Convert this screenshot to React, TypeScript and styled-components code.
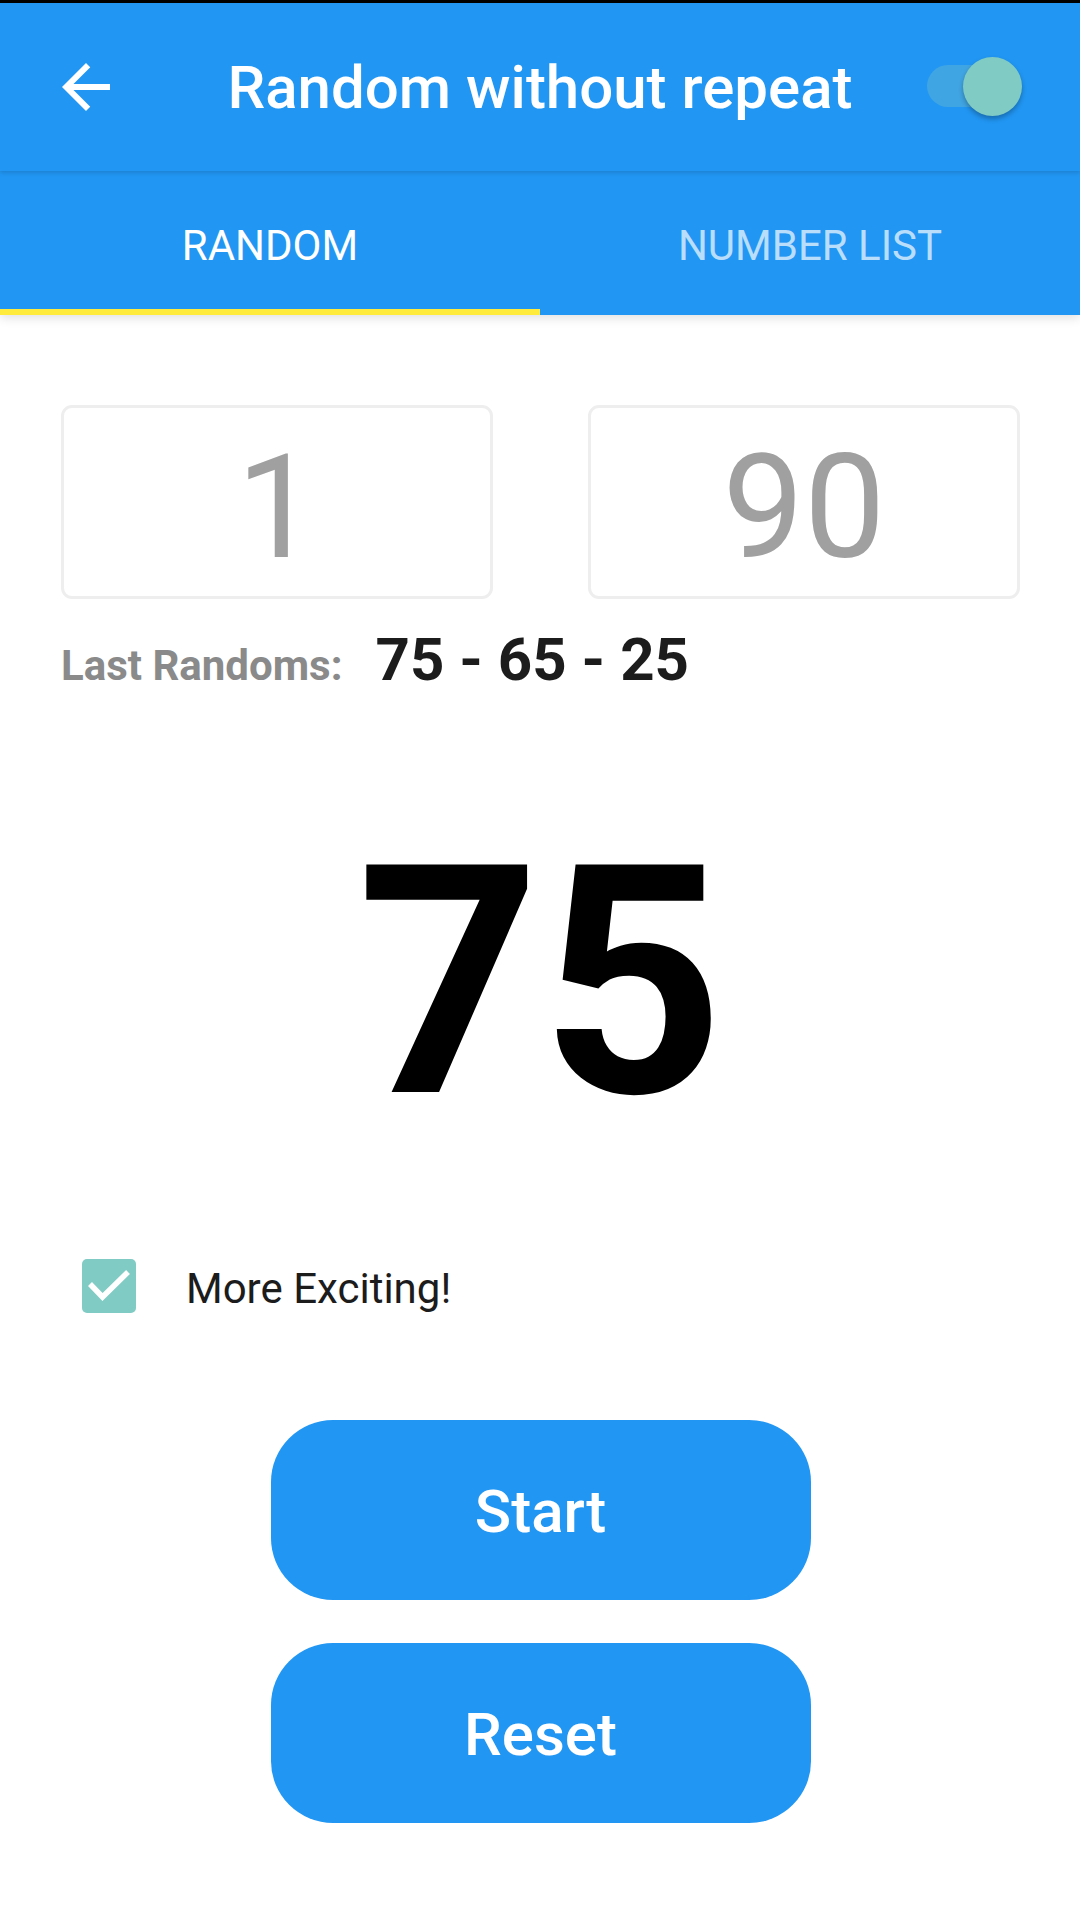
import React from "react";
import styled, { createGlobalStyle } from "styled-components";

const GlobalStyle = createGlobalStyle`
  html, body {
    margin: 0;
    padding: 0;
    background: #ffffff;
    font-family: Roboto, "Noto Sans", "Liberation Sans", sans-serif;
  }
  * { box-sizing: border-box; }
`;

const Screen = styled.div`
  width: 1080px;
  min-height: 1920px;
  background: #ffffff;
  display: flex;
  flex-direction: column;
`;

const StatusStrip = styled.div`
  height: 3px;
  background: #000000;
`;

const AppBar = styled.header`
  position: relative;
  z-index: 2;
  height: 168px;
  background: #2196f3;
  display: grid;
  grid-template-columns: 170px 1fr 170px;
  align-items: center;
  box-shadow: 0 2px 4px rgba(0, 0, 0, 0.14);
`;

const IconButton = styled.button`
  width: 72px;
  height: 72px;
  margin-left: 50px;
  padding: 0;
  border: none;
  background: transparent;
  display: flex;
  align-items: center;
  justify-content: center;
  color: #ffffff;
`;

const Title = styled.h1`
  margin: 0;
  text-align: center;
  color: #ffffff;
  font-size: 60px;
  font-weight: 500;
  letter-spacing: 0;
`;

const SwitchSlot = styled.div`
  display: flex;
  justify-content: flex-end;
  padding-right: 58px;
`;

const Switch = styled.div`
  position: relative;
  width: 95px;
  height: 60px;
`;

const SwitchTrack = styled.div`
  position: absolute;
  left: 0;
  top: 8px;
  width: 86px;
  height: 42px;
  border-radius: 21px;
  background: #40a5e3;
`;

const SwitchThumb = styled.div`
  position: absolute;
  right: 0;
  top: 0;
  width: 59px;
  height: 59px;
  border-radius: 50%;
  background: #80cbc4;
  box-shadow: 0 3px 5px rgba(0, 0, 0, 0.28);
`;

const TabBar = styled.nav`
  position: relative;
  z-index: 1;
  height: 144px;
  background: #2196f3;
  display: grid;
  grid-template-columns: 1fr 1fr;
  box-shadow: 0 3px 10px rgba(0, 0, 0, 0.12);
`;

const Tab = styled.div<{ $active?: boolean }>`
  display: flex;
  align-items: center;
  justify-content: center;
  padding-top: 11px;
  font-size: 42px;
  font-weight: 400;
  color: ${(p) => (p.$active ? "#ffffff" : "rgba(255, 255, 255, 0.7)")};
  border-bottom: 6px solid ${(p) => (p.$active ? "#ffeb3b" : "transparent")};
`;

const Content = styled.main`
  display: flex;
  flex-direction: column;
  padding: 90px 60px 0 61px;
`;

const RangeRow = styled.div`
  display: grid;
  grid-template-columns: 432px 432px;
  justify-content: space-between;
`;

const RangeBox = styled.div`
  height: 194px;
  border: 3px solid #eeeeee;
  border-radius: 11px;
  display: flex;
  align-items: center;
  justify-content: center;
  padding-top: 10px;
  font-size: 145px;
  font-weight: 400;
  color: #a0a0a0;
  line-height: 1;
`;

const HistoryRow = styled.div`
  margin-top: 25px;
  height: 72px;
  display: flex;
  align-items: baseline;
  gap: 33px;
  line-height: 72px;
`;

const HistoryLabel = styled.span`
  font-size: 42px;
  font-weight: 700;
  color: #8a8a8a;
`;

const HistoryValues = styled.span`
  font-size: 60px;
  font-weight: 700;
  color: #1c1c1c;
`;

const BigNumber = styled.div`
  margin-top: 127px;
  height: 320px;
  line-height: 320px;
  text-align: center;
  font-size: 320px;
  font-weight: 700;
  color: #000000;
`;

const CheckRow = styled.label`
  margin-top: 116px;
  margin-left: 21px;
  display: flex;
  align-items: center;
  gap: 50px;
`;

const CheckBox = styled.span`
  width: 54px;
  height: 54px;
  border-radius: 5px;
  background: #80cbc4;
  display: flex;
  align-items: center;
  justify-content: center;
`;

const CheckText = styled.span`
  font-size: 42px;
  font-weight: 400;
  color: #1c1c1c;
  padding-top: 4px;
`;

const Actions = styled.div`
  margin-top: 107px;
  display: flex;
  flex-direction: column;
  align-items: center;
  gap: 43px;
`;

const PillButton = styled.button`
  width: 540px;
  height: 180px;
  border: none;
  border-radius: 62px;
  background: #2196f3;
  color: #ffffff;
  font-family: Roboto, "Noto Sans", "Liberation Sans", sans-serif;
  font-size: 60px;
  font-weight: 500;
  padding-top: 4px;
`;

const BackArrow = () => (
  <svg width="72" height="72" viewBox="0 0 24 24" fill="currentColor">
    <path d="M20 11H7.83l5.59-5.59L12 4l-8 8 8 8 1.41-1.41L7.83 13H20v-2z" />
  </svg>
);

const CheckMark = () => (
  <svg width="54" height="54" viewBox="0 0 54 54" fill="none">
    <path d="M8 25 L20.5 38 L46 13" stroke="#ffffff" strokeWidth="5.5" />
  </svg>
);

export default function App() {
  return (
    <Screen>
      <GlobalStyle />
      <StatusStrip />
      <AppBar>
        <IconButton aria-label="Back">
          <BackArrow />
        </IconButton>
        <Title>Random without repeat</Title>
        <SwitchSlot>
          <Switch>
            <SwitchTrack />
            <SwitchThumb />
          </Switch>
        </SwitchSlot>
      </AppBar>
      <TabBar>
        <Tab $active>RANDOM</Tab>
        <Tab>NUMBER LIST</Tab>
      </TabBar>
      <Content>
        <RangeRow>
          <RangeBox>1</RangeBox>
          <RangeBox>90</RangeBox>
        </RangeRow>
        <HistoryRow>
          <HistoryLabel>Last Randoms:</HistoryLabel>
          <HistoryValues>75 - 65 - 25</HistoryValues>
        </HistoryRow>
        <BigNumber>75</BigNumber>
        <CheckRow>
          <CheckBox>
            <CheckMark />
          </CheckBox>
          <CheckText>More Exciting!</CheckText>
        </CheckRow>
        <Actions>
          <PillButton>Start</PillButton>
          <PillButton>Reset</PillButton>
        </Actions>
      </Content>
    </Screen>
  );
}
